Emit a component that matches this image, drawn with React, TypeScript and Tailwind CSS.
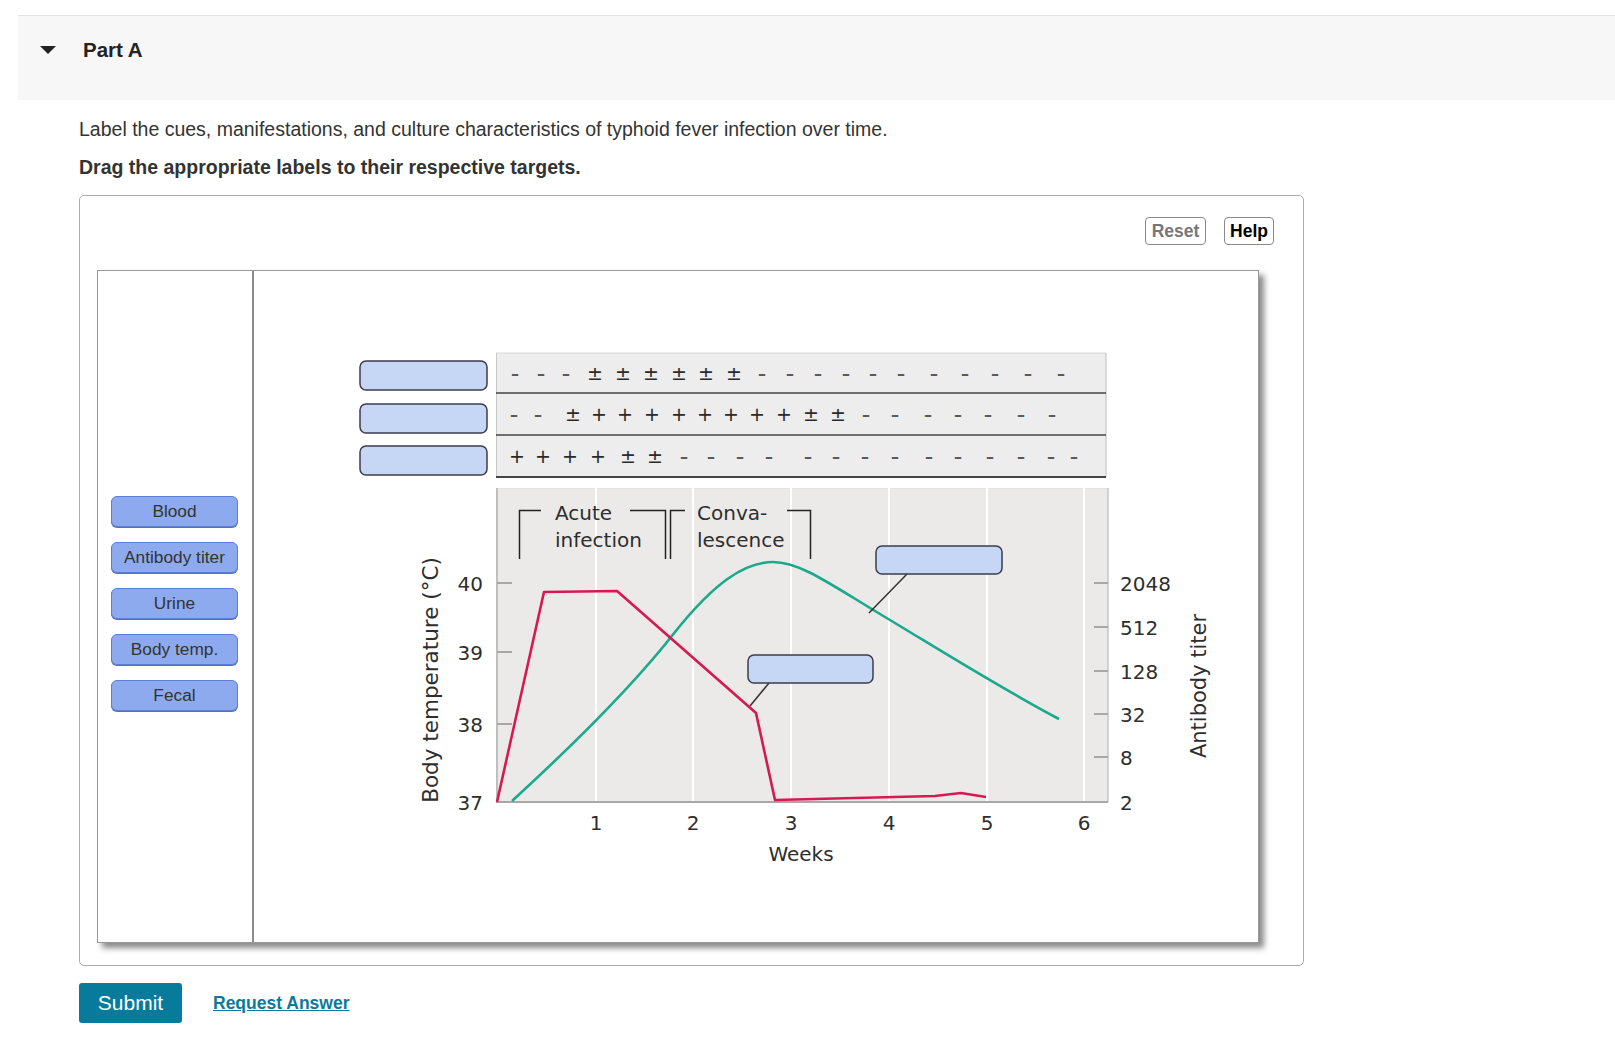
import React from "react";

const F = "DejaVu Sans, Verdana, sans-serif";

type Sym = [number, string];

const M = "–";

const row1: Sym[] = [
  [515, M], [541, M], [566, M],
  [595, "±"], [623, "±"], [651, "±"], [679, "±"], [706, "±"], [734, "±"],
  [762, M], [790, M], [818, M], [846, M], [873, M], [901, M], [934, M], [965, M], [995, M], [1028, M], [1061, M],
];
const row2: Sym[] = [
  [514, M], [538, M], [573, "±"],
  [599, "+"], [625, "+"], [652, "+"], [679, "+"], [705, "+"], [731, "+"], [757, "+"], [784, "+"],
  [811, "±"], [838, "±"],
  [866, M], [895, M], [928, M], [958, M], [988, M], [1021, M], [1052, M],
];
const row3: Sym[] = [
  [517, "+"], [543, "+"], [570, "+"], [598, "+"], [628, "±"], [655, "±"],
  [684, M], [711, M], [740, M], [769, M], [808, M], [836, M], [865, M], [895, M], [929, M], [958, M], [990, M], [1021, M], [1051, M], [1074, M],
];

function Row({ items, y }: { items: Sym[]; y: number }) {
  return (
    <g>
      {items.map(([x, s], i) => (
        <text
          key={i}
          x={x}
          y={y}
          textAnchor="middle"
          dominantBaseline="central"
          fontFamily={F}
          fontSize={s === M ? 16 : 19}
          fontWeight={s === M ? 700 : 400}
          fill={s === M ? "#5a5a5a" : "#2a2a2a"}
        >
          {s}
        </text>
      ))}
    </g>
  );
}

function Target({ x, y, w, h }: { x: number; y: number; w: number; h: number }) {
  return <rect x={x} y={y} width={w} height={h} rx={6} fill="#c6d6f5" stroke="#3c3c4e" strokeWidth={1.5} />;
}

function Chart() {
  const weeks = [596, 693, 791, 889, 987, 1084];
  const leftTicks: [number, string][] = [[583, "40"], [652, "39"], [724, "38"], [802, "37"]];
  const rightTicks: [number, string][] = [[583, "2048"], [627, "512"], [671, "128"], [714, "32"], [757, "8"], [802, "2"]];
  return (
    <svg width={1004} height={671} viewBox="254 271 1004 671" className="block">
      {/* table */}
      <rect x={496} y={353} width={610} height={124} fill="#ededed" />
      <line x1={496} y1={353} x2={1106} y2={353} stroke="#d8d8d8" strokeWidth={1} />
      <line x1={496.5} y1={353} x2={496.5} y2={477} stroke="#c8c8c8" strokeWidth={1} />
      <line x1={1106} y1={353} x2={1106} y2={477} stroke="#bdbdbd" strokeWidth={1} />
      <line x1={496} y1={393} x2={1106} y2={393} stroke="#444" strokeWidth={1.6} />
      <line x1={496} y1={435} x2={1106} y2={435} stroke="#444" strokeWidth={1.6} />
      <line x1={496} y1={477} x2={1106} y2={477} stroke="#444" strokeWidth={1.8} />
      <Row items={row1} y={373} />
      <Row items={row2} y={414} />
      <Row items={row3} y={456} />

      {/* plot area */}
      <rect x={496} y={488} width={612} height={314} fill="#ebeae9" />
      <line x1={496} y1={488.5} x2={1108} y2={488.5} stroke="#e2e2e2" strokeWidth={1} />
      {weeks.map((x) => (
        <line key={x} x1={x} y1={488} x2={x} y2={802} stroke="#ffffff" strokeWidth={2} />
      ))}
      <line x1={1108} y1={488} x2={1108} y2={802} stroke="#c4c4c4" strokeWidth={1.5} />
      <line x1={497} y1={488} x2={497} y2={802} stroke="#b0b0b0" strokeWidth={1.5} />
      <line x1={496} y1={802} x2={1108} y2={802} stroke="#a8a8a8" strokeWidth={2} />

      {leftTicks.slice(0, 3).map(([y]) => (
        <line key={y} x1={497} y1={y} x2={512} y2={y} stroke="#a8a8a8" strokeWidth={2} />
      ))}
      {rightTicks.slice(0, 5).map(([y]) => (
        <line key={y} x1={1094} y1={y} x2={1108} y2={y} stroke="#a8a8a8" strokeWidth={2} />
      ))}

      {leftTicks.map(([y, t]) => (
        <text key={t} x={483} y={y + 1} textAnchor="end" dominantBaseline="central" fontFamily={F} fontSize={20} fill="#2e2e2e">
          {t}
        </text>
      ))}
      {rightTicks.map(([y, t]) => (
        <text key={t} x={1120} y={y + 1} textAnchor="start" dominantBaseline="central" fontFamily={F} fontSize={20} fill="#2e2e2e">
          {t}
        </text>
      ))}
      {weeks.map((x, i) => (
        <text key={x} x={x} y={823} textAnchor="middle" dominantBaseline="central" fontFamily={F} fontSize={20} fill="#2e2e2e">
          {i + 1}
        </text>
      ))}
      <text x={801} y={854} textAnchor="middle" dominantBaseline="central" fontFamily={F} fontSize={20} fill="#2e2e2e">
        Weeks
      </text>
      <text
        transform="translate(430 680) rotate(-90)"
        textAnchor="middle"
        dominantBaseline="central"
        fontFamily={F}
        fontSize={21.5}
        fill="#2e2e2e"
      >
        Body temperature (°C)
      </text>
      <text
        transform="translate(1199 686) rotate(-90)"
        textAnchor="middle"
        dominantBaseline="central"
        fontFamily={F}
        fontSize={21}
        fill="#2e2e2e"
      >
        Antibody titer
      </text>

      {/* brackets */}
      <g stroke="#222" strokeWidth={1.5} fill="none">
        <polyline points="519.5,559 519.5,510.5 541,510.5" />
        <polyline points="630,510.5 665.5,510.5 665.5,559" />
        <polyline points="670.5,559 670.5,510.5 685,510.5" />
        <polyline points="787,510.5 810.5,510.5 810.5,559" />
      </g>
      <text x={555} y={513} dominantBaseline="central" fontFamily={F} fontSize={20} fill="#2e2e2e">Acute</text>
      <text x={555} y={540} dominantBaseline="central" fontFamily={F} fontSize={20} fill="#2e2e2e">infection</text>
      <text x={697} y={513} dominantBaseline="central" fontFamily={F} fontSize={20} fill="#2e2e2e">Conva-</text>
      <text x={697} y={540} dominantBaseline="central" fontFamily={F} fontSize={20} fill="#2e2e2e">lescence</text>

      {/* curves */}
      <path
        d="M512,801 C560,757 630,690 675,632 C715,582 745,562 773,562 C800,562 830,584 880,614 C940,650 1000,688 1059,719"
        fill="none"
        stroke="#1aa98c"
        strokeWidth={2.6}
      />
      <polyline
        points="497,802 544,592 617,591 756,713 775,800 935,796 961,793 986,797"
        fill="none"
        stroke="#d51a52"
        strokeWidth={2.6}
        strokeLinejoin="round"
      />

      {/* connectors */}
      <line x1={907} y1={574} x2={869} y2={613} stroke="#333" strokeWidth={1.5} />
      <line x1={769} y1={683} x2={750} y2={706} stroke="#333" strokeWidth={1.5} />

      {/* drop targets */}
      <Target x={360} y={361} w={127} h={29} />
      <Target x={360} y={404} w={127} h={29} />
      <Target x={360} y={446} w={127} h={29} />
      <Target x={876} y={546} w={126} h={28} />
      <Target x={748} y={655} w={125} h={28} />
    </svg>
  );
}

const labels = ["Blood", "Antibody titer", "Urine", "Body temp.", "Fecal"];

export default function App() {
  return (
    <div className="min-h-screen bg-white pt-[15px] font-['Liberation_Sans',Arial,sans-serif] text-[#333]">
      <div className="ml-[18px] flex h-[85px] items-start border-t border-[#e3e3e3] bg-[#f7f7f7] pl-[22px] pt-[22px]">
        <div className="mt-[8px] h-0 w-0 border-l-[8px] border-r-[8px] border-t-[8px] border-l-transparent border-r-transparent border-t-[#222]" />
        <div className="ml-[27px] text-[20.5px] font-bold leading-[24px] text-[#222]">Part A</div>
      </div>

      <div className="pl-[79px]">
        <p className="mt-[17px] text-[19.5px] leading-[24px] text-[#333]">
          Label the cues, manifestations, and culture characteristics of typhoid fever infection over time.
        </p>
        <p className="mt-[14px] text-[19.5px] font-bold leading-[24px] text-[#333]">
          Drag the appropriate labels to their respective targets.
        </p>

        <div className="mt-[16px] flex h-[771px] w-[1225px] flex-col rounded-[5px] border border-[#ababab]">
          <div className="flex justify-end gap-[18px] pr-[29px] pt-[21px]">
            <button className="flex h-[28px] w-[61px] items-center justify-center rounded-[4px] border border-[#8a8a8a] bg-white text-[17.5px] font-bold text-[#777]">
              Reset
            </button>
            <button className="flex h-[28px] w-[50px] items-center justify-center rounded-[4px] border border-[#8a8a8a] bg-white text-[17.5px] font-bold text-black">
              Help
            </button>
          </div>

          <div className="ml-[17px] mt-[25px] flex h-[673px] w-[1162px] border border-[#999] shadow-[5px_5px_6px_#8a8a8a]">
            <div className="flex w-[156px] flex-col items-start gap-[15px] border-r-2 border-[#8c8c8c] pl-[13px] pt-[225px]">
              {labels.map((l) => (
                <div
                  key={l}
                  className="flex h-[31px] w-[127px] items-center justify-center rounded-[6px] border border-[#5b7fd8] bg-[#8eaaee] text-[17.3px] text-[#333] shadow-[0_1px_0_#5670b8]"
                >
                  {l}
                </div>
              ))}
            </div>
            <div className="flex-1">
              <Chart />
            </div>
          </div>
        </div>

        <div className="mt-[17px] flex items-center">
          <button className="h-[40px] w-[103px] rounded-[3px] bg-[#087a9c] text-[21px] text-white">Submit</button>
          <a href="#" className="ml-[31px] text-[17.5px] font-bold text-[#0a7a9c] underline">
            Request Answer
          </a>
        </div>
      </div>
    </div>
  );
}
